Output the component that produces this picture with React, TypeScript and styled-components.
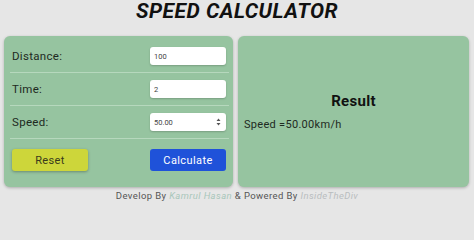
import styled, { createGlobalStyle } from "styled-components";

const Global = createGlobalStyle`
  body {
    margin: 0;
    background: #e6e6e6;
    font-family: Roboto, "Liberation Sans", sans-serif;
  }
`;

const Page = styled.div`
  width: 474px;
  height: 204px;
  display: flex;
  flex-direction: column;
`;
const Title = styled.h1`
  margin: 0;
  height: 36px;
  line-height: 22px;
  text-align: center;
  font-size: 21px;
  font-weight: 700;
  font-style: italic;
  color: #111;
  letter-spacing: 0.5px;
`;
const Panels = styled.div`
  display: flex;
  gap: 5px;
  padding: 0 5px 0 4px;
  height: 151px;
`;
const Panel = styled.div`
  flex: 1;
  background: #96c4a0;
  border-radius: 6px;
  box-shadow: 0 1px 3px rgba(0, 0, 0, 0.25);
`;
const FormPanel = styled(Panel)`
  padding: 4px 4px 0 6px;
`;
const Row = styled.div`
  display: flex;
  align-items: center;
  justify-content: space-between;
  padding: 7px 3px 7px 2px;
  border-bottom: 1px solid #b6d8bd;
`;
const Label = styled.label`
  font-size: 11.5px;
  color: #1e2a22;
  letter-spacing: 0.3px;
`;
const Input = styled.input`
  display: block;
  width: 76px;
  height: 18px;
  box-sizing: border-box;
  border: 0;
  border-radius: 3px;
  background: #fff;
  padding: 0 4px;
  font-size: 7.5px;
  color: #444;
  font-family: inherit;
  box-shadow: 0 1px 2px rgba(0, 0, 0, 0.2);
  &:focus {
    outline: none;
  }
`;
const SpinInput = styled.div`
  position: relative;
  display: flex;
`;
const Spin = styled.svg`
  position: absolute;
  right: 5px;
  top: 5px;
`;
const Buttons = styled.div`
  display: flex;
  justify-content: space-between;
  padding: 10px 3px 0 2px;
`;
const Btn = styled.button<{ $primary?: boolean }>`
  width: 76px;
  height: 22px;
  border: 0;
  border-radius: 3px;
  font-family: inherit;
  font-size: 11px;
  font-weight: 400;
  letter-spacing: 0.4px;
  background: ${(p) => (p.$primary ? "#1f52d9" : "#cdd63a")};
  color: ${(p) => (p.$primary ? "#fff" : "#3a3a1c")};
  box-shadow: ${(p) =>
    p.$primary ? "none" : "0 1px 3px rgba(0, 0, 0, 0.3)"};
`;
const ResultPanel = styled(Panel)`
  display: flex;
  flex-direction: column;
  justify-content: center;
  padding: 0 6px;
`;
const ResultTitle = styled.h2`
  margin: 0 0 8px;
  text-align: center;
  font-size: 15px;
  font-weight: 700;
  color: #111;
  letter-spacing: 0.3px;
`;
const ResultText = styled.p`
  margin: 0;
  font-size: 11px;
  color: #1e2a22;
  letter-spacing: 0.3px;
`;
const Footer = styled.footer`
  flex: 1;
  display: flex;
  align-items: center;
  justify-content: center;
  font-size: 9.5px;
  color: #555;
  letter-spacing: 0.4px;
  white-space: pre;
`;
const Name = styled.span<{ $tone: string }>`
  font-style: italic;
  color: ${(p) => p.$tone};
`;

export default function App() {
  return (
    <Page>
      <Global />
      <Title>SPEED CALCULATOR</Title>
      <Panels>
        <FormPanel>
          <Row>
            <Label>Distance:</Label>
            <Input defaultValue="100" />
          </Row>
          <Row>
            <Label>Time:</Label>
            <Input defaultValue="2" />
          </Row>
          <Row>
            <Label>Speed:</Label>
            <SpinInput>
              <Input defaultValue="50.00" />
              <Spin width="5" height="8" viewBox="0 0 5 8">
                <path d="M2.5 0.5 L4.5 3 L0.5 3 Z M2.5 7.5 L4.5 5 L0.5 5 Z" fill="#555" />
              </Spin>
            </SpinInput>
          </Row>
          <Buttons>
            <Btn>Reset</Btn>
            <Btn $primary>Calculate</Btn>
          </Buttons>
        </FormPanel>
        <ResultPanel>
          <ResultTitle>Result</ResultTitle>
          <ResultText>Speed =50.00km/h</ResultText>
        </ResultPanel>
      </Panels>
      <Footer>
        Develop By <Name $tone="#a9c6bb">Kamrul Hasan</Name> &amp; Powered By{" "}
        <Name $tone="#b9bdbf">InsideTheDiv</Name>
      </Footer>
    </Page>
  );
}
